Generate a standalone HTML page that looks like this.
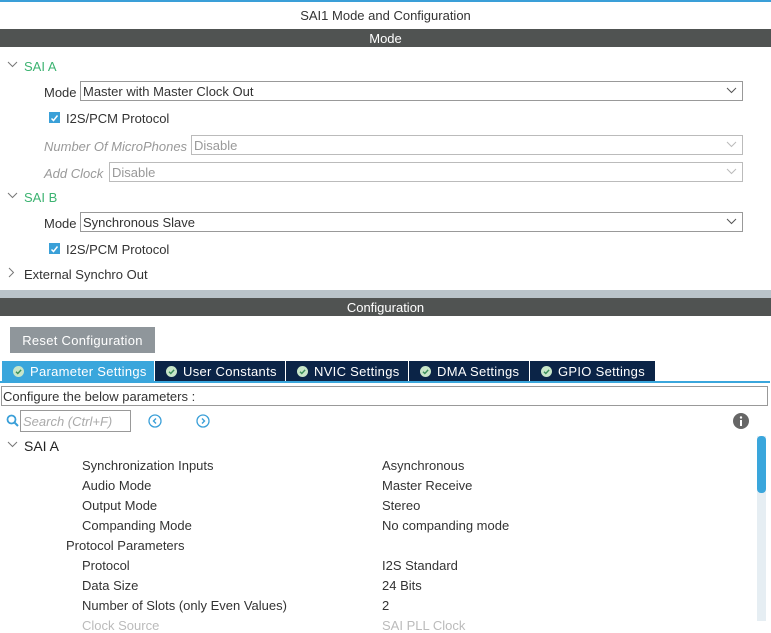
<!DOCTYPE html><html><head><style>
body{margin:0;width:771px;height:621px;overflow:hidden;background:#fff;font-family:"Liberation Sans",sans-serif;font-size:13px;color:#333;position:relative}
.a{position:absolute;white-space:nowrap}
.bar{position:absolute;left:0;width:771px;background:#505352;color:#fff;text-align:center;font-size:13px}
.sel{position:absolute;height:20px;border:1px solid #999;box-sizing:border-box;padding-left:2px;line-height:19px;background:#fff}
.sel.dis{border-color:#bbb;color:#999}
.sel svg{position:absolute;right:5px;top:5px}
.cb{position:absolute;width:11px;height:11px;background:#3aa0d8}
.tab{position:absolute;top:361px;height:20px;background:#0b2447;color:#fff;line-height:21px;font-size:13px;letter-spacing:0.3px}
.tab svg{display:inline-block;margin:0 6px 0 11px;vertical-align:-1px}
.g{color:#3cb371}
.it{color:#999;font-style:italic}
</style></head><body>
<div class="a" style="left:0;top:0;width:771px;height:2px;background:#3a9fd8"></div>
<div class="a" style="left:0;top:8px;width:771px;text-align:center;font-size:13px">SAI1 Mode and Configuration</div>
<div class="bar" style="top:29px;height:18px;line-height:19px">Mode</div>
<svg class="a" style="left:7px;top:61px" width="11" height="8"><path d="M1 1l4.5 4.5L10 1" stroke="#777" fill="none"/></svg>
<div class="a g" style="left:24px;top:59px">SAI A</div>
<div class="a" style="left:44px;top:85px">Mode</div>
<div class="sel" style="left:80px;top:81px;width:663px">Master with Master Clock Out<svg width="11" height="8"><path d="M1 1l4.5 4.5L10 1" stroke="#555" fill="none"/></svg></div>
<div class="cb" style="left:49px;top:112px"><svg width="11" height="11"><path d="M2.5 5.5l2 2 4-5" stroke="#fff" stroke-width="1.5" fill="none"/></svg></div>
<div class="a" style="left:66px;top:111px">I2S/PCM Protocol</div>
<div class="a it" style="left:44px;top:139px">Number Of MicroPhones</div>
<div class="sel dis" style="left:191px;top:135px;width:552px">Disable<svg width="11" height="8"><path d="M1 1l4.5 4.5L10 1" stroke="#bbb" fill="none"/></svg></div>
<div class="a it" style="left:44px;top:166px">Add Clock</div>
<div class="sel dis" style="left:109px;top:162px;width:634px">Disable<svg width="11" height="8"><path d="M1 1l4.5 4.5L10 1" stroke="#bbb" fill="none"/></svg></div>
<svg class="a" style="left:7px;top:192px" width="11" height="8"><path d="M1 1l4.5 4.5L10 1" stroke="#777" fill="none"/></svg>
<div class="a g" style="left:24px;top:190px">SAI B</div>
<div class="a" style="left:44px;top:216px">Mode</div>
<div class="sel" style="left:80px;top:212px;width:663px">Synchronous Slave<svg width="11" height="8"><path d="M1 1l4.5 4.5L10 1" stroke="#555" fill="none"/></svg></div>
<div class="cb" style="left:49px;top:243px"><svg width="11" height="11"><path d="M2.5 5.5l2 2 4-5" stroke="#fff" stroke-width="1.5" fill="none"/></svg></div>
<div class="a" style="left:66px;top:242px">I2S/PCM Protocol</div>
<svg class="a" style="left:8px;top:267px" width="8" height="11"><path d="M1 1l4.5 4.5L1 10" stroke="#777" fill="none"/></svg>
<div class="a" style="left:24px;top:267px">External Synchro Out</div>
<div class="a" style="left:0;top:290px;width:771px;height:8px;background:#b9c3c9"></div>
<div class="bar" style="top:298px;height:18px;line-height:19px">Configuration</div>
<div class="a" style="left:10px;top:327px;width:145px;height:26px;background:#8f969b;color:#fff;text-align:center;line-height:27px;letter-spacing:0.3px">Reset Configuration</div>
<div class="tab" style="left:2px;width:152px;background:#3aa6dc"><svg width="11" height="11"><circle cx="5.5" cy="5.5" r="5.5" fill="#c8e6c9"/><path d="M3 5.7l1.8 1.8 3.3-3.6" stroke="#3a8f5a" stroke-width="1.4" fill="none"/></svg>Parameter Settings</div>
<div class="tab" style="left:155px;width:130px"><svg width="11" height="11"><circle cx="5.5" cy="5.5" r="5.5" fill="#c8e6c9"/><path d="M3 5.7l1.8 1.8 3.3-3.6" stroke="#3a8f5a" stroke-width="1.4" fill="none"/></svg>User Constants</div>
<div class="tab" style="left:286px;width:122px"><svg width="11" height="11"><circle cx="5.5" cy="5.5" r="5.5" fill="#c8e6c9"/><path d="M3 5.7l1.8 1.8 3.3-3.6" stroke="#3a8f5a" stroke-width="1.4" fill="none"/></svg>NVIC Settings</div>
<div class="tab" style="left:409px;width:120px"><svg width="11" height="11"><circle cx="5.5" cy="5.5" r="5.5" fill="#c8e6c9"/><path d="M3 5.7l1.8 1.8 3.3-3.6" stroke="#3a8f5a" stroke-width="1.4" fill="none"/></svg>DMA Settings</div>
<div class="tab" style="left:530px;width:125px"><svg width="11" height="11"><circle cx="5.5" cy="5.5" r="5.5" fill="#c8e6c9"/><path d="M3 5.7l1.8 1.8 3.3-3.6" stroke="#3a8f5a" stroke-width="1.4" fill="none"/></svg>GPIO Settings</div>
<div class="a" style="left:0;top:381px;width:770px;height:2px;background:#3aa6dc"></div>
<div class="a" style="left:1px;top:386px;width:767px;height:20px;border:1px solid #999;box-sizing:border-box;line-height:19px;padding-left:1px">Configure the below parameters :</div>
<svg class="a" style="left:6px;top:414px" width="13" height="13"><circle cx="5.5" cy="5.5" r="4" stroke="#3a9fd8" stroke-width="1.8" fill="none"/><path d="M8.5 8.5l3.5 3.5" stroke="#3a9fd8" stroke-width="2"/></svg>
<div class="a it" style="left:20px;top:410px;width:111px;height:22px;border:1px solid #999;box-sizing:border-box;line-height:21px;padding-left:2px;color:#aaa">Search (Ctrl+F)</div>
<svg class="a" style="left:148px;top:414px" width="14" height="14"><circle cx="7" cy="7" r="6" stroke="#3a9fd8" stroke-width="1.3" fill="none"/><path d="M8 4.5L5.5 7 8 9.5" stroke="#3a9fd8" stroke-width="1.4" fill="none"/></svg>
<svg class="a" style="left:196px;top:414px" width="14" height="14"><circle cx="7" cy="7" r="6" stroke="#3a9fd8" stroke-width="1.3" fill="none"/><path d="M6 4.5L8.5 7 6 9.5" stroke="#3a9fd8" stroke-width="1.4" fill="none"/></svg>
<svg class="a" style="left:733px;top:413px" width="16" height="16"><circle cx="8" cy="8" r="8" fill="#666"/><rect x="7" y="7" width="2" height="6" fill="#fff"/><circle cx="8" cy="4.5" r="1.2" fill="#fff"/></svg>
<svg class="a" style="left:7px;top:441px" width="11" height="8"><path d="M1 1l4.5 4.5L10 1" stroke="#777" fill="none"/></svg>
<div class="a" style="left:24px;top:438px;color:#222;font-size:14px">SAI A</div>
<div class="a" style="left:757px;top:436px;width:9px;height:185px;background:#e6eef3"></div>
<div class="a" style="left:757px;top:436px;width:9px;height:57px;background:#3aa6dc;border-radius:4px"></div>
<div class="a" style="left:82px;top:458px">Synchronization Inputs</div><div class="a" style="left:382px;top:458px">Asynchronous</div>
<div class="a" style="left:82px;top:478px">Audio Mode</div><div class="a" style="left:382px;top:478px">Master Receive</div>
<div class="a" style="left:82px;top:498px">Output Mode</div><div class="a" style="left:382px;top:498px">Stereo</div>
<div class="a" style="left:82px;top:518px">Companding Mode</div><div class="a" style="left:382px;top:518px">No companding mode</div>
<div class="a" style="left:66px;top:538px">Protocol Parameters</div>
<div class="a" style="left:82px;top:558px">Protocol</div><div class="a" style="left:382px;top:558px">I2S Standard</div>
<div class="a" style="left:82px;top:578px">Data Size</div><div class="a" style="left:382px;top:578px">24 Bits</div>
<div class="a" style="left:82px;top:598px">Number of Slots (only Even Values)</div><div class="a" style="left:382px;top:598px">2</div>
<div class="a" style="left:82px;top:618px;color:#bbb">Clock Source</div><div class="a" style="left:382px;top:618px;color:#bbb">SAI PLL Clock</div>
</body></html>
